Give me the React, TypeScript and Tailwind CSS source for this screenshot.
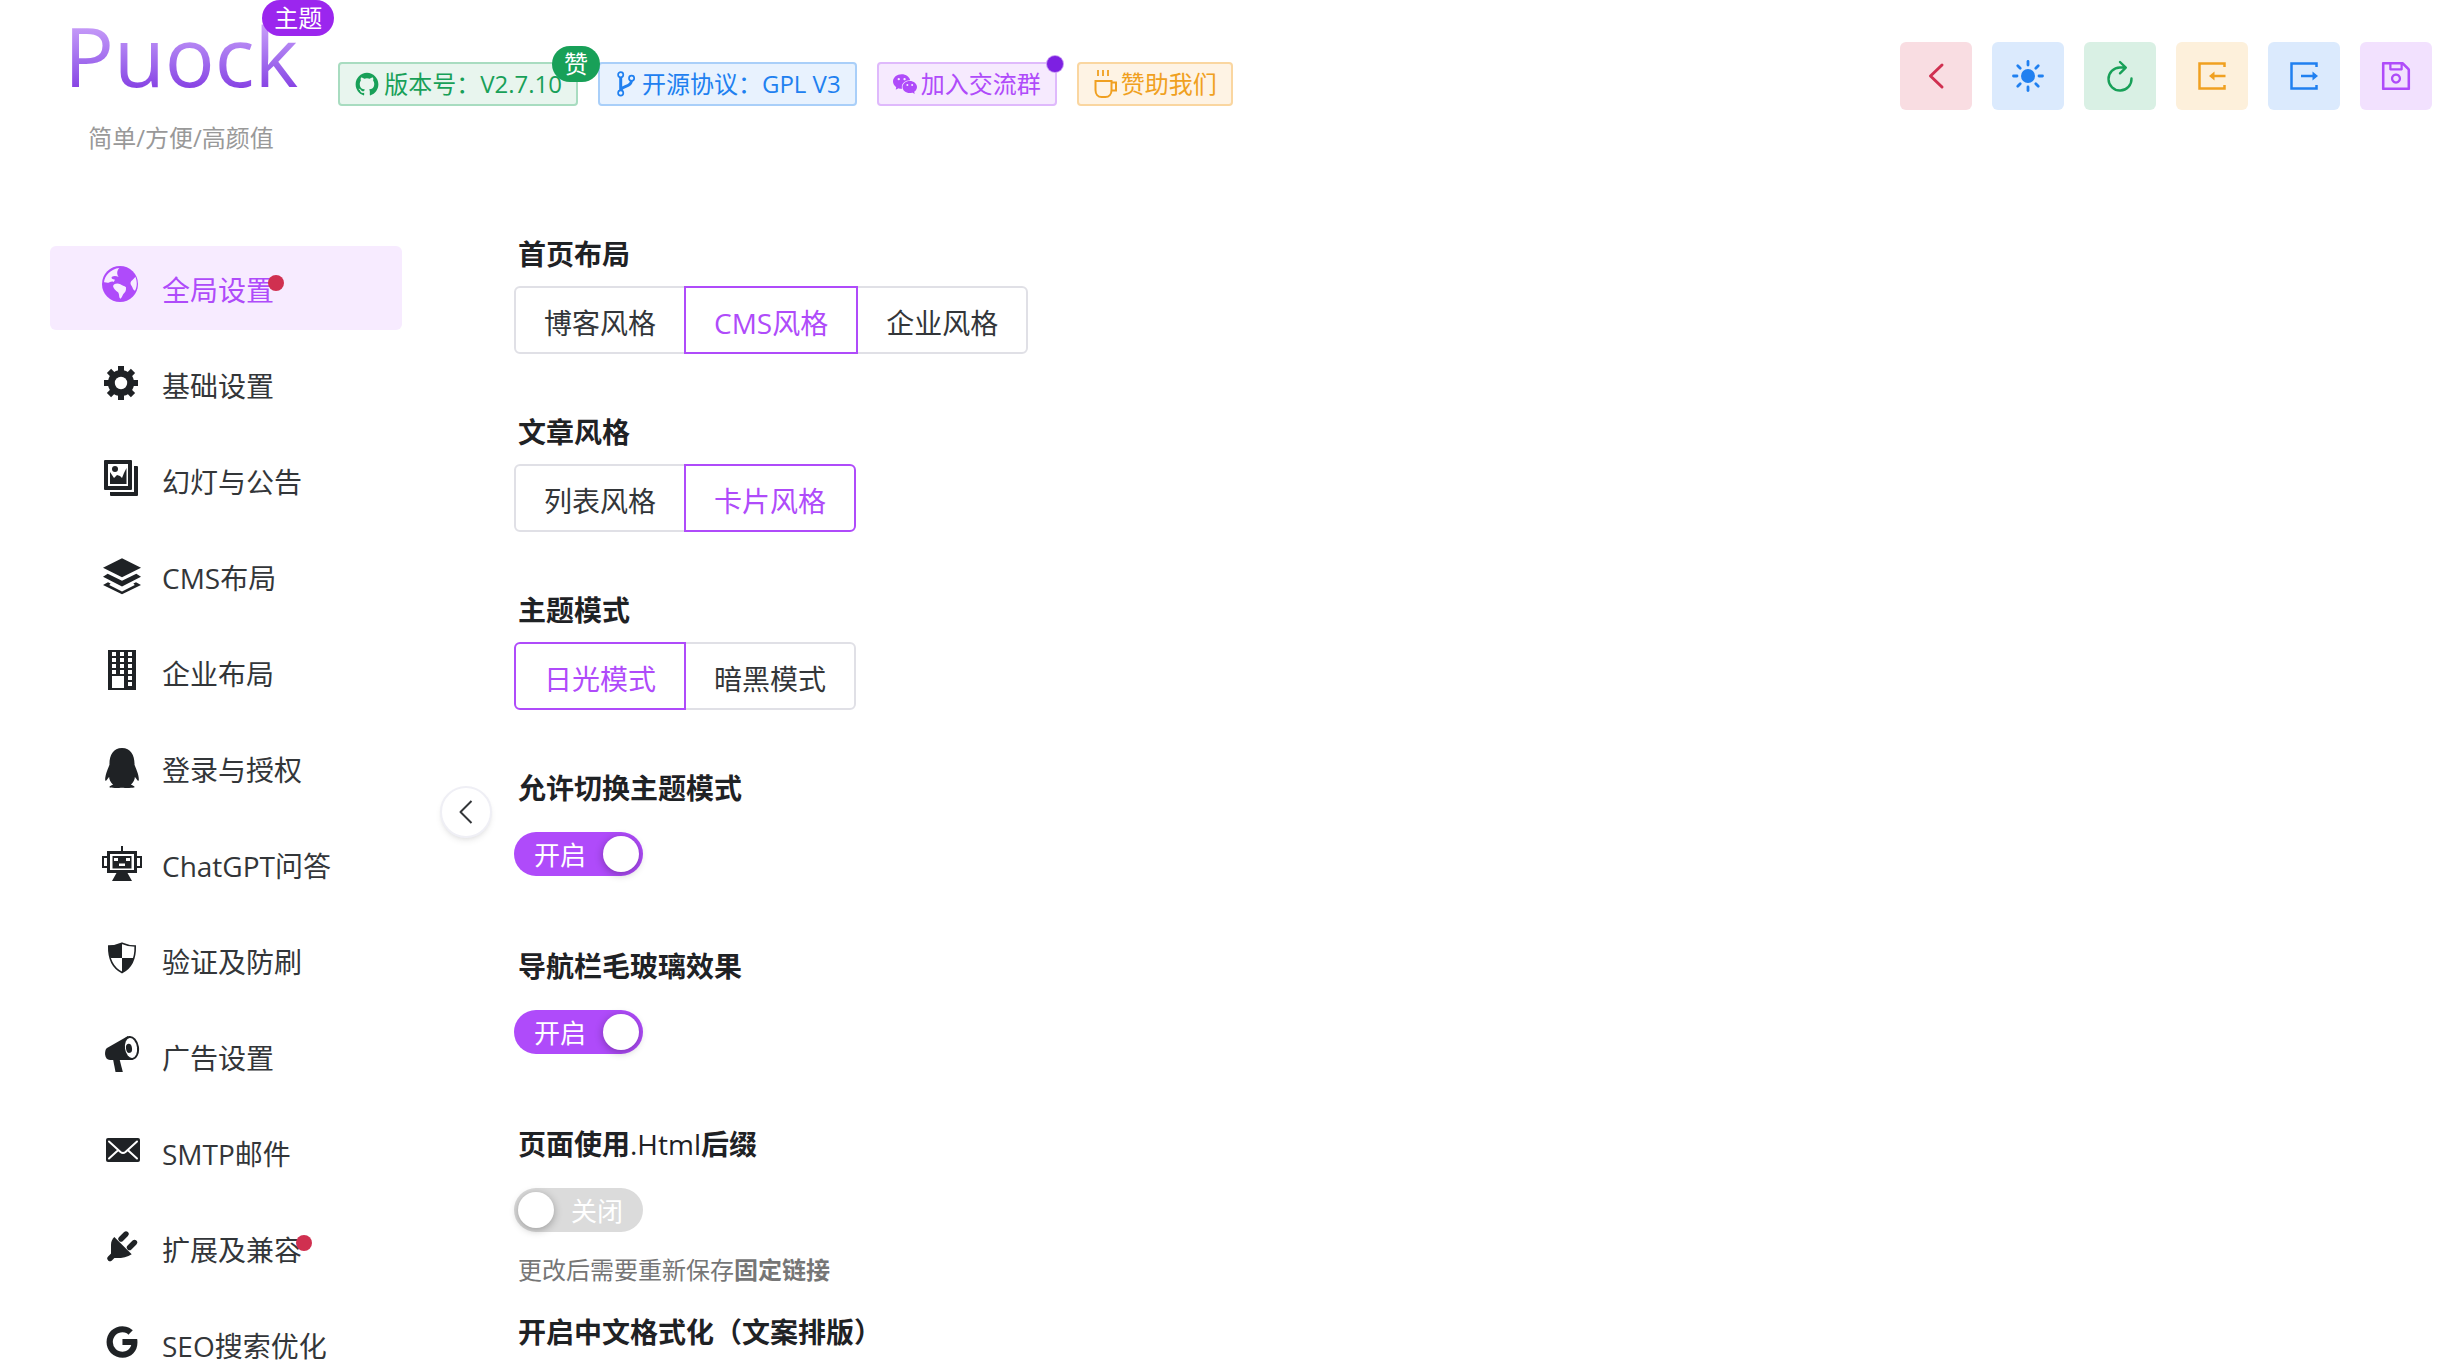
import { ReactNode, useState } from "react";
import { AiOutlineSave } from "react-icons/ai";
import { FaQq } from "react-icons/fa";
import { IoLogoGithub, IoLogoGoogle, IoLogoWechat } from "react-icons/io5";

const EarthIcon = () => (
  <svg viewBox="12 12 108 108" className="size-9 mb-2" fill="currentColor">
    <circle cx="66" cy="66" r="54" />
    <g className="fill-[#f7ebff]">
      <path d="M18 61C20 40 38 21 64 18c-8 8-8 19-2 27-7-4-15-4-20-1-4 4 2 8 9 9l-4 7c-6-4-12 1-16 2-5 1-9-2-13-1z" />
      <path d="M45 72c4-8 14-9 22-5 5 3 12 5 17 9 1 11-3 16-8 20-3 5-4 11-9 14-5-3-2-13-7-19-7-5-13-11-15-19z" />
      <path d="M112 44c6 14 6 30-1 42-6-2-7-9-10-14-4-5-5-10-1-15 5-4 8-8 12-13z" />
    </g>
  </svg>
);

const SettingsIcon = () => (
  <svg viewBox="0 0 40 40" className="size-10" fill="currentColor">
    {[0, 45, 90, 135].map((angle) => (
      <rect
        key={angle}
        x="16"
        y="2"
        width="6"
        height="34"
        transform={`rotate(${angle} 19 19)`}
      />
    ))}
    <circle cx="19" cy="19" r="9.6" fill="none" stroke="currentColor" strokeWidth="7" />
    <circle cx="19" cy="19" r="6.2" fill="#fff" />
  </svg>
);

const SlidesIcon = () => (
  <svg viewBox="0 0 40 40" className="size-10" fill="currentColor">
    <path
      fillRule="evenodd"
      d="M3 0h26a1 1 0 0 1 1 1v28a1 1 0 0 1-1 1H3a1 1 0 0 1-1-1V1a1 1 0 0 1 1-1zm3 4v22h20V4z"
    />
    <path d="M32 6h3a1 1 0 0 1 1 1v28a1 1 0 0 1-1 1H9a1 1 0 0 1-1-1v-3h24z" />
    <circle cx="13" cy="9" r="3" />
    <path d="M8 24V12l4 6 3-3 3 1 2 2 2-5 2.500-5v16z" />
  </svg>
);

const LayersIcon = () => (
  <svg viewBox="0 0 40 40" className="size-10" fill="currentColor">
    <path d="M20 2.300 39 11.800 20 21.300 1 11.800z" />
    <path d="m1 20.700 4.700-3L20 24.800l14.300-7.100 4.700 3-19 9.700z" />
    <path d="m1 29 5-2.800 2.600 1.300L7.200 29 20 35.400 32.800 29l-1.400-1.500 2.600-1.300 5 2.800-19 9.300z" />
  </svg>
);

const BuildingIcon = () => (
  <svg viewBox="0 0 40 40" className="size-10 overflow-visible" fill="currentColor">
    <path d="M6-2h28v40H6z" />
    <g fill="#fff">
      {[0, 6, 12, 18].map((y) => (
        <path key={y} d={`M10 ${y}h4v4h-4zM18 ${y}h4v4h-4zM26 ${y}h4v4h-4z`} />
      ))}
      <path d="M26 24h4v4h-4zM26 30h4v4h-4zM10 24h12v12H10z" />
    </g>
  </svg>
);

const RobotIcon = () => (
  <svg viewBox="0 0 40 40" className="size-10" fill="currentColor">
    <path d="M19 2h2v5h-2z" />
    <path fillRule="evenodd" d="M5 7h30v22H5zm3 3v16h24V10z" />
    <path d="M10.500 12h19v12.500h-19z" />
    <path fill="#fff" d="M12 14h4v3h-4zM24 14h4v3h-4zM17 19.500h6V22h-6z" />
    <path d="M0 12h5v2H2v8h3v2H0zM40 12h-5v2h3v8h-3v2h5zM14.500 29h11l4.500 8H10z" />
  </svg>
);

const ShieldIcon = () => (
  <svg viewBox="0 0 40 40" className="size-10">
    <path
      d="M20 3.200C16 5 11 6 6.800 6 6.500 17 9 27 20 32.500 31 27 33.500 17 33.200 6 29 6 24 5 20 3.200z"
      fill="none"
      stroke="currentColor"
      strokeWidth="1.600"
    />
    <path
      d="M20 3.200C16 5 11 6 6.800 6c0 4.500.3 8.500 1.700 12H20zM20 18h11.500C30 24 26 29.500 20 32.500z"
      fill="currentColor"
    />
  </svg>
);

const MegaphoneIcon = () => (
  <svg viewBox="0 0 40 40" className="size-10" fill="currentColor">
    <path d="M26 0 5 12c-3 2-3 12 3 12h22z" />
    <path d="M11 23h6.500l3.300 13h-7.300z" />
    <ellipse cx="28.800" cy="12" rx="8.200" ry="12" transform="rotate(-8 28.800 12)" />
    <ellipse cx="29" cy="12" rx="6" ry="10" fill="#fff" transform="rotate(-8 29 12)" />
    <ellipse cx="27" cy="12.300" rx="3" ry="4.600" transform="rotate(-8 27 12.300)" />
  </svg>
);

const MailIcon = () => (
  <svg viewBox="0 0 40 40" className="size-10">
    <rect x="4" y="6" width="34" height="24" rx="2" fill="currentColor" />
    <path
      d="M7 9.500 18.500 20q2.500 2 5 0L35 9.500M7 26.500l8.500-7.700M35 26.500l-8.500-7.700"
      fill="none"
      stroke="#fff"
      strokeWidth="2"
      strokeLinecap="round"
    />
  </svg>
);

const PlugIcon = () => (
  <svg viewBox="0 0 40 40" className="size-10" fill="currentColor">
    <path d="M12.300 9 29.700 26.200C25 29.500 18 30.500 12 30l-3-4V17c0-4 1.500-6 3.300-8z" />
    <path
      d="m8 30.500 4-4M19 11l5-5M27.500 19.500l5-5"
      stroke="currentColor"
      strokeWidth="5.400"
      strokeLinecap="round"
    />
  </svg>
);

const BranchIcon = () => (
  <svg
    viewBox="0 0 24 24"
    className="size-6 overflow-visible"
    fill="none"
    stroke="currentColor"
    strokeWidth="1.700"
  >
    <circle cx="6.700" cy="2.700" r="2.600" />
    <circle cx="6.700" cy="21" r="2.600" />
    <circle cx="17.600" cy="6.200" r="2.600" />
    <path d="M6.700 5.500v13M17.400 9c-.4 6-8.400 4.500-10.400 8.500" strokeWidth="3" />
  </svg>
);

const CoffeeIcon = () => (
  <svg
    viewBox="0 0 24 24"
    className="size-6 overflow-visible"
    fill="none"
    stroke="currentColor"
    strokeWidth="2"
  >
    <path d="M5-2v6M10-2v6M15-2v6" strokeWidth="1.800" />
    <path d="M2.500 9h16v9c0 4-2.500 7-6 7H8.500c-3.500 0-6-3-6-7z" />
    <path d="M18.500 10.500H23v8h-4.500" />
  </svg>
);

const BackIcon = () => (
  <svg viewBox="0 0 36 36" className="size-9" fill="none" stroke="currentColor" strokeWidth="3">
    <path d="M24 7 12.500 18 24 29" strokeLinecap="round" strokeLinejoin="round" />
  </svg>
);

const SunIcon = () => (
  <svg viewBox="0 0 36 36" className="size-9" fill="currentColor">
    <circle cx="18" cy="18" r="7" />
    {[0, 45, 90, 135, 180, 225, 270, 315].map((angle) => (
      <path
        key={angle}
        d="M18 3.500v3.500"
        stroke="currentColor"
        strokeWidth="2.800"
        strokeLinecap="round"
        transform={`rotate(${angle} 18 18)`}
      />
    ))}
  </svg>
);

const ReloadIcon = () => (
  <svg viewBox="0 0 36 36" className="size-9" fill="none" stroke="currentColor" strokeWidth="2.400">
    <path
      d="M29.500 20.500A11.500 11.500 0 1 1 18 9.500h5.500M18 4l5.800 5.600L18 15.300"
      strokeLinecap="round"
      strokeLinejoin="round"
    />
  </svg>
);

const ImportIcon = () => (
  <svg viewBox="0 0 36 36" className="size-9" fill="none" stroke="currentColor" strokeWidth="2.500">
    <path d="M30.500 9V5.500h-25v25h25V27M20 18h11.500" />
    <path d="m15 18 5.500-4.500v9z" fill="currentColor" stroke="none" />
  </svg>
);

const ExportIcon = () => (
  <svg viewBox="0 0 36 36" className="size-9" fill="none" stroke="currentColor" strokeWidth="2.500">
    <path d="M30.500 9V5.500h-25v25h25V27M15 18h12" />
    <path d="m32 18-5.500-4.500v9z" fill="currentColor" stroke="none" />
  </svg>
);

interface MenuItem {
  text: string;
  icon: ReactNode;
  dot?: boolean;
}

const menu: MenuItem[] = [
  { text: "全局设置", icon: <EarthIcon />, dot: true },
  { text: "基础设置", icon: <SettingsIcon /> },
  { text: "幻灯与公告", icon: <SlidesIcon /> },
  { text: "CMS布局", icon: <LayersIcon /> },
  { text: "企业布局", icon: <BuildingIcon /> },
  { text: "登录与授权", icon: <FaQq className="size-10" /> },
  { text: "ChatGPT问答", icon: <RobotIcon /> },
  { text: "验证及防刷", icon: <ShieldIcon /> },
  { text: "广告设置", icon: <MegaphoneIcon /> },
  { text: "SMTP邮件", icon: <MailIcon /> },
  { text: "扩展及兼容", icon: <PlugIcon />, dot: true },
  { text: "SEO搜索优化", icon: <IoLogoGoogle className="size-9 ml-0.5 mb-1" /> },
];

const actions = [
  { label: "返回", icon: <BackIcon />, color: "bg-[#f9dde2] text-[#d03050]" },
  { label: "切换主题", icon: <SunIcon />, color: "bg-[#dbeafd] text-[#2080f0]" },
  { label: "刷新", icon: <ReloadIcon />, color: "bg-[#d9f0e4] text-[#18a058]" },
  { label: "导入", icon: <ImportIcon />, color: "bg-[#fdf0db] text-[#f0a020]" },
  { label: "导出", icon: <ExportIcon />, color: "bg-[#dbeafd] text-[#2080f0]" },
  { label: "保存", icon: <AiOutlineSave className="size-9" />, color: "bg-[#f2e1fe] text-[#af4bfa]" },
];

interface TagProps {
  icon: ReactNode;
  color: string;
  children: ReactNode;
}

const Tag = ({ icon, color, children }: TagProps) => (
  <a
    href="#"
    className={`relative h-11 px-3.5 flex items-center gap-1 border-2 rounded-sm text-2xl whitespace-nowrap ${color}`}
  >
    {icon}
    <span>{children}</span>
  </a>
);

const Header = () => (
  <header className="h-[222px] flex justify-between items-start pl-16 pr-5">
    <div className="flex items-start gap-10">
      <div className="pt-2.5 flex flex-col items-center">
        <div className="relative">
          <h1 className="text-[83px] leading-[90px] bg-linear-to-b from-[#d8b0fc] to-[#7d28df] bg-clip-text text-transparent">
            Puock
          </h1>
          <span className="absolute top-2 left-full -translate-1/2 h-9 px-3 rounded-full bg-[#9b26ee] text-white text-2xl leading-9 whitespace-nowrap">
            主题
          </span>
        </div>
        <p className="mt-5 text-2xl leading-9 text-[#999]">简单/方便/高颜值</p>
      </div>
      <div className="pt-[62px] flex gap-5">
        <Tag
          icon={<IoLogoGithub className="size-[26px]" />}
          color="z-10 bg-[#e8f5ee] border-[#a8dcc0] text-[#18a058]"
        >
          版本号：V2.7.10
          <span className="absolute top-0 left-full -translate-1/2 h-9 px-3 rounded-full bg-[#18a058] text-white leading-9">
            赞
          </span>
        </Tag>
        <Tag icon={<BranchIcon />} color="bg-[#e8f2fe] border-[#a9cff9] text-[#2080f0]">
          开源协议：GPL V3
        </Tag>
        <Tag
          icon={<IoLogoWechat className="size-6" />}
          color="bg-[#f6eafe] border-[#dfb9fc] text-[#af4bfa]"
        >
          加入交流群
          <span className="absolute top-0 left-full -translate-1/2 size-4 rounded-full bg-[#7d20e2] ring-1 ring-[#c79bf3]" />
        </Tag>
        <Tag icon={<CoffeeIcon />} color="bg-[#fef3e4] border-[#fad6a0] text-[#f0a020]">
          赞助我们
        </Tag>
      </div>
    </div>
    <div className="pt-[42px] flex gap-5">
      {actions.map(({ label, icon, color }) => (
        <button
          key={label}
          aria-label={label}
          className={`w-[72px] h-[68px] rounded-md flex items-center justify-center ${color}`}
        >
          {icon}
        </button>
      ))}
    </div>
  </header>
);

const Sidebar = () => {
  const [current, setCurrent] = useState(0);

  return (
    <aside className="relative w-[466px] shrink-0 pt-6 pb-4 pl-[50px] pr-16">
      <nav className="flex flex-col gap-3">
        {menu.map(({ text, icon, dot }, index) => (
          <button
            key={text}
            onClick={() => setCurrent(index)}
            className={`h-21 pl-13 flex items-center gap-5 rounded-md text-[28px] leading-7 ${
              index === current ? "bg-[#f7ebff] text-[#af4bfa]" : "text-[#333639]"
            }`}
          >
            <span className={`w-10 flex ${index === current ? "" : "text-[#1f2225]"}`}>
              {icon}
            </span>
            <span className="relative pt-1">
              {text}
              {dot && (
                <span className="absolute top-[3px] -right-2.5 size-4 rounded-full bg-[#d03050]" />
              )}
            </span>
          </button>
        ))}
      </nav>
      <button
        aria-label="收起菜单"
        className="absolute top-1/2 left-full -translate-1/2 size-13 rounded-full border-2 border-[#efeff5] bg-white text-[#333639] shadow-md shadow-black/8 flex items-center justify-center"
      >
        <svg viewBox="0 0 36 36" className="size-9" fill="none" stroke="currentColor" strokeWidth="2">
          <path d="M23.500 7 12.500 18l11 11" strokeLinejoin="round" />
        </svg>
      </button>
    </aside>
  );
};

interface FieldProps {
  label: ReactNode;
  help?: ReactNode;
  children: ReactNode;
}

const Field = ({ label, help, children }: FieldProps) => (
  <fieldset>
    <legend className="h-[62px] pl-1 text-[28px] leading-[60px] font-bold text-[#1f2225]">
      {label}
    </legend>
    <div className="h-17 flex items-center">{children}</div>
    {help ? (
      <p className="pt-1.5 pb-3 pl-1 text-2xl leading-10 text-[#767676]">{help}</p>
    ) : (
      <div className="h-12" />
    )}
  </fieldset>
);

interface RadioGroupProps {
  options: string[];
  defaultValue: string;
}

const RadioGroup = ({ options, defaultValue }: RadioGroupProps) => {
  const [value, setValue] = useState(defaultValue);

  return (
    <div className="flex -space-x-0.5">
      {options.map((option) => (
        <label
          key={option}
          className={`relative h-17 pt-1.5 px-7 flex items-center border-2 first:rounded-l-md last:rounded-r-md text-[28px] cursor-pointer ${
            option === value
              ? "z-10 border-[#af4bfa] text-[#af4bfa]"
              : "border-[#e0e0e6] text-[#333639]"
          }`}
        >
          <input
            type="radio"
            className="sr-only"
            checked={option === value}
            onChange={() => setValue(option)}
          />
          {option}
        </label>
      ))}
    </div>
  );
};

const Switch = ({ defaultOn = false }: { defaultOn?: boolean }) => {
  const [on, setOn] = useState(defaultOn);

  return (
    <label
      className={`relative w-[129px] h-11 flex items-center justify-between rounded-full text-[26px] text-white whitespace-nowrap cursor-pointer ${
        on ? "pl-5 pr-1 bg-[#af4bfa]" : "pl-1 pr-5 flex-row-reverse bg-[#dbdbdb]"
      }`}
    >
      <input
        type="checkbox"
        role="switch"
        className="sr-only"
        checked={on}
        onChange={() => setOn(!on)}
      />
      <span className="pt-0.5">{on ? "开启" : "关闭"}</span>
      <span className="size-9 rounded-full bg-white shadow-[0_2px_8px_rgba(0,0,0,0.3)]" />
    </label>
  );
};

const App = () => (
  <div className="h-screen overflow-hidden bg-white font-['Open_Sans','Noto_Sans_CJK_SC',sans-serif]">
    <Header />
    <div className="flex items-start">
      <Sidebar />
      <main className="flex-1 pt-0.5 pl-12">
        <Field label="首页布局">
          <RadioGroup options={["博客风格", "CMS风格", "企业风格"]} defaultValue="CMS风格" />
        </Field>
        <Field label="文章风格">
          <RadioGroup options={["列表风格", "卡片风格"]} defaultValue="卡片风格" />
        </Field>
        <Field label="主题模式">
          <RadioGroup options={["日光模式", "暗黑模式"]} defaultValue="日光模式" />
        </Field>
        <Field label="允许切换主题模式">
          <Switch defaultOn />
        </Field>
        <Field label="导航栏毛玻璃效果">
          <Switch defaultOn />
        </Field>
        <Field
          label={
            <>
              页面使用<span className="font-normal">.Html</span>后缀
            </>
          }
          help={
            <>
              更改后需要重新保存<strong>固定链接</strong>
            </>
          }
        >
          <Switch />
        </Field>
        <Field label="开启中文格式化（文案排版）">
          <Switch />
        </Field>
      </main>
    </div>
  </div>
);

export default App;
